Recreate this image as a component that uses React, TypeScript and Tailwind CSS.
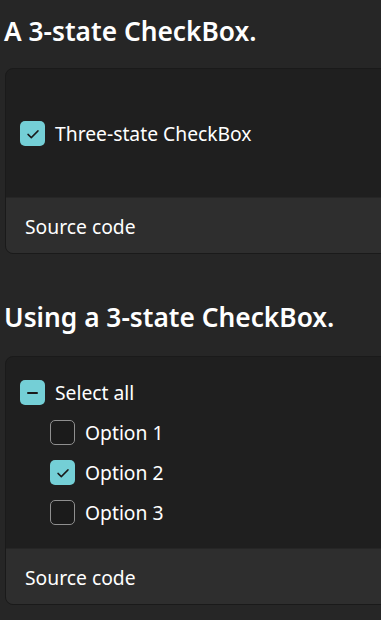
import React from "react";

type CheckState = "checked" | "unchecked" | "indeterminate";

function Box({ state }: { state: CheckState }) {
  if (state === "unchecked") {
    return (
      <span className="w-[25px] h-[25px] shrink-0 rounded-[5px] border-[1.5px] border-[#8f8f8f] bg-[#1b1b1b]" />
    );
  }
  return (
    <span className="w-[25px] h-[25px] shrink-0 rounded-[5px] bg-[#74cfd6] flex items-center justify-center">
      {state === "checked" ? (
        <svg width="16" height="16" viewBox="0 0 16 16" fill="none">
          <path
            d="M3 8.4 L6.3 11.6 L13 4.9"
            stroke="#1a1a1a"
            strokeWidth="1.5"
            strokeLinecap="round"
            strokeLinejoin="round"
          />
        </svg>
      ) : (
        <span className="block w-[11px] h-[2px] rounded-full bg-[#1a1a1a]" />
      )}
    </span>
  );
}

function Check({ state, label }: { state: CheckState; label: string }) {
  return (
    <div className="flex items-center gap-[10px] h-[25px]">
      <Box state={state} />
      <span className="text-[19.3px] text-white leading-none">{label}</span>
    </div>
  );
}

function Card({ children, className }: { children: React.ReactNode; className: string }) {
  return (
    <div className="ml-[5px] -mr-10 rounded-[8px] border border-[#1a1a1a] bg-[#1f1f1f] overflow-hidden">
      <div className={className}>{children}</div>
      <div className="h-[56px] bg-[#2e2e2e] border-t border-[#262626] flex items-center pl-[19px] pt-[3px]">
        <span className="text-[19.3px] text-white">Source code</span>
      </div>
    </div>
  );
}

export default function App() {
  return (
    <div
      className="w-full h-[620px] bg-[#262626] overflow-hidden"
      style={{ fontFamily: '"Noto Sans", "Open Sans", sans-serif' }}
    >
      <h2 className="pt-[15px] pl-[4px] text-[26.3px] font-semibold text-white leading-[33px]">
        A 3-state CheckBox.
      </h2>
      <div className="mt-[20px]">
        <Card className="h-[128px] flex items-center pl-[14px] pt-[1px]">
          <Check state="checked" label="Three-state CheckBox" />
        </Card>
      </div>

      <h2 className="mt-[47px] pl-[4px] text-[26.3px] font-semibold text-white leading-[33px]">
        Using a 3-state CheckBox.
      </h2>
      <div className="mt-[22px]">
        <Card className="pt-[23px] pb-[23px] pl-[14px] flex flex-col gap-[15px]">
          <Check state="indeterminate" label="Select all" />
          <div className="pl-[30px] flex flex-col gap-[15px]">
            <Check state="unchecked" label="Option 1" />
            <Check state="checked" label="Option 2" />
            <Check state="unchecked" label="Option 3" />
          </div>
        </Card>
      </div>
    </div>
  );
}
